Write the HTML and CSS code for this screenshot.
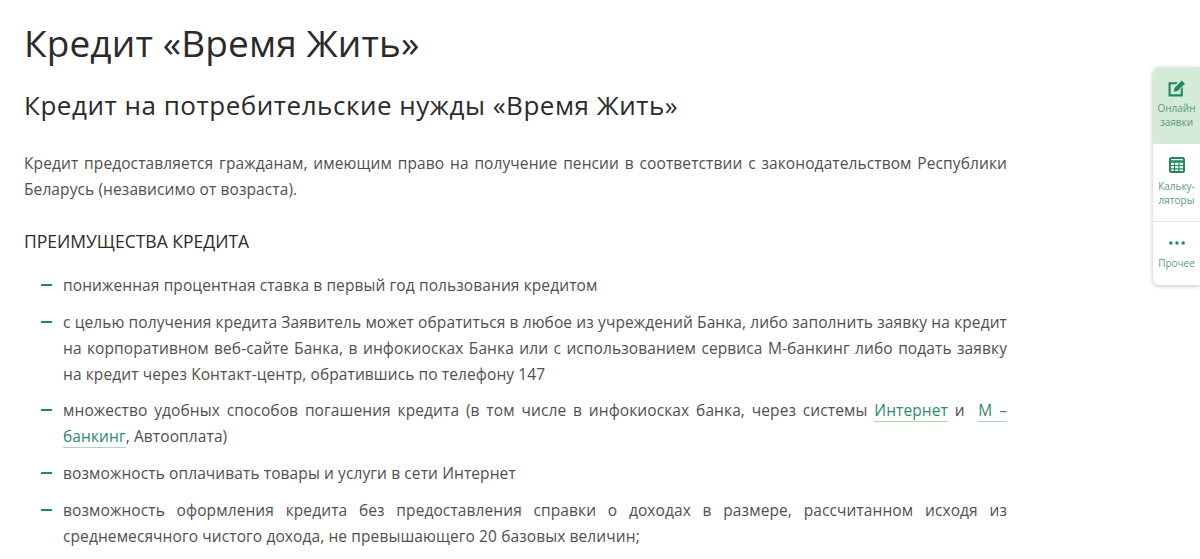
FILE: index.html
```html
<!DOCTYPE html>
<html lang="ru">
<head>
<meta charset="utf-8">
<title>Кредит «Время Жить»</title>
<link rel="stylesheet" href="styles.css">
</head>
<body>
<main class="content">
  <h1 class="title">Кредит «Время Жить»</h1>
  <h2 class="subtitle">Кредит на потребительские нужды «Время Жить»</h2>
  <p class="text">Кредит предоставляется гражданам, имеющим право на получение пенсии в соответствии с законодательством Республики Беларусь (независимо от возраста).</p>
  <h3 class="section">ПРЕИМУЩЕСТВА КРЕДИТА</h3>
  <ul class="list">
    <li>пониженная процентная ставка в первый год пользования кредитом</li>
    <li>с целью получения кредита Заявитель может обратиться в любое из учреждений Банка, либо заполнить заявку на кредит на корпоративном веб-сайте Банка, в инфокиосках Банка или с использованием сервиса М-банкинг либо подать заявку на кредит через Контакт-центр, обратившись по телефону 147</li>
    <li>множество удобных способов погашения кредита (в том числе в инфокиосках банка, через системы <a class="link" href="#">Интернет</a> и &nbsp;<a class="link" href="#">М – банкинг</a>, Автооплата)</li>
    <li>возможность оплачивать товары и услуги в сети Интернет</li>
    <li>возможность оформления кредита без предоставления справки о доходах в размере, рассчитанном исходя из среднемесячного чистого дохода, не превышающего 20 базовых величин;</li>
  </ul>
</main>
<nav class="side">
  <a class="side-item active" href="#">
    <svg class="side-icon" viewBox="2 1.500 17 17"><path d="M2.500 4.500h9l-2 2H4.500v9.500h9.500v-5l2-2v9h-13.500z" fill="currentColor"/><path d="M7.500 13.500l.6-3.500 7-7 2.900 2.900-7 7z" fill="currentColor"/></svg>
    <span>Онлайн<br>заявки</span>
  </a>
  <a class="side-item" href="#">
    <svg class="side-icon" viewBox="2 2 16 16"><rect x="3" y="3" width="14" height="14" rx="1.500" fill="none" stroke="currentColor" stroke-width="2"/><path d="M3 6.500h14" stroke="currentColor" stroke-width="2.500"/><path d="M3.500 10.500h13M3.500 13.800h13M7.500 8v8M12 8v8" stroke="currentColor" stroke-width="1.200"/></svg>
    <span>Кальку-<br>ляторы</span>
  </a>
  <a class="side-item" href="#">
    <svg class="side-icon" viewBox="2 2 16 16"><circle cx="3.800" cy="10" r="1.700" fill="currentColor"/><circle cx="10" cy="10" r="1.700" fill="currentColor"/><circle cx="16.200" cy="10" r="1.700" fill="currentColor"/></svg>
    <span>Прочее</span>
  </a>
</nav>
</body>
</html>
```
FILE: styles.css
```css
html, body {
  margin: 0;
  padding: 0;
  height: 559px;
  overflow: hidden;
  background: #fff;
}
body {
  font-family: "Open Sans", "Noto Sans", sans-serif;
  color: #505050;
  font-size: 15.500px;
  letter-spacing: .1px;
  line-height: 26px;
}
.content {
  width: 983px;
  padding: 16px 0 0 24px;
}
.title {
  margin: 0;
  font-weight: 400;
  font-size: 37px;
  letter-spacing: .13px;
  line-height: 54px;
  color: #2b2b2b;
}
.subtitle {
  margin: 17px 0 0;
  font-weight: 400;
  font-size: 26px;
  letter-spacing: .52px;
  line-height: 36px;
  color: #2b2b2b;
}
.text {
  margin: 27px 0 0;
  text-align: justify;
}
.section {
  margin: 26px 0 0;
  font-weight: 400;
  font-size: 17.500px;
  line-height: 26px;
  letter-spacing: 0;
  color: #2b2b2b;
}
.list {
  list-style: none;
  margin: 18px 0 0;
  padding: 0 0 0 39px;
}
.list li {
  position: relative;
  margin-bottom: 10.650px;
  text-align: justify;
}
.list li::before {
  content: "";
  position: absolute;
  left: -22px;
  top: 12px;
  width: 11px;
  height: 2px;
  background: #1f8a5b;
}
.link {
  color: #2f8a68;
  text-decoration: none;
  border-bottom: 1px solid #a8dcae;
}
.side {
  position: absolute;
  top: 67px;
  right: 0;
  width: 47px;
  background: #fff;
  border-radius: 6px 0 0 6px;
  box-shadow: 0 1px 4px rgba(0, 0, 0, .25);
  overflow: hidden;
}
.side-item {
  box-sizing: border-box;
  display: flex;
  flex-direction: column;
  align-items: center;
  text-decoration: none;
  color: #1f8a5b;
  font-size: 10px;
  letter-spacing: 0;
  line-height: 14px;
  text-align: center;
  padding-top: 13px;
  height: 78px;
  border-bottom: 1px solid #e4e4e4;
}
.side-item span {
  color: #5a9a7c;
  margin-top: 6px;
}
.side-item.active {
  background: #d4ebd8;
  height: 77px;
  padding-top: 12px;
}
.side-item.active span {
  margin-top: 4px;
}
.side-item:last-child {
  border-bottom: 0;
  height: 63px;
  padding-top: 13px;
}
.side-item:last-child span {
  margin-top: 5px;
}
.side-icon {
  width: 16px;
  height: 16px;
  flex: none;
}
.active .side-icon {
  width: 18px;
  height: 18px;
}
```
